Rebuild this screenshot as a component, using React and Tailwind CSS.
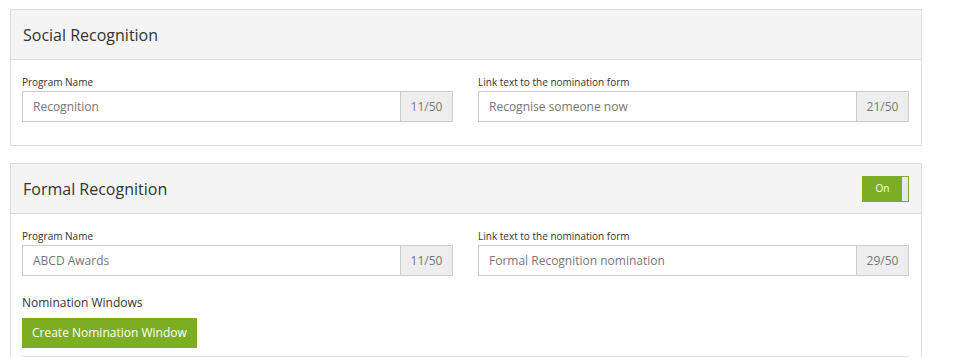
import React from 'react';

const font = { fontFamily: '"Open Sans", "Liberation Sans", sans-serif' };

const CountedInput = ({ label, value, max = 50 }) => (
  <div className="flex flex-col">
    <label className="text-[10px] leading-[15px] text-[#333] mb-[1px]">{label}</label>
    <div className="flex h-[31px]">
      <div className="flex-1 border border-[#ccc] flex items-center pl-[10px] text-[12px] text-[#777]">
        {value}
      </div>
      <div className="w-[52px] border border-l-0 border-[#ccc] bg-[#eeeeee] flex items-center justify-center text-[12px] text-[#777]">
        {value.length}/{max}
      </div>
    </div>
  </div>
);

const Panel = ({ title, toggle, children }) => (
  <div className="w-[912px] border border-[#ddd] bg-white">
    <div className="h-[50px] bg-[#f4f4f4] border-b border-[#ddd] pl-[12px] pr-[12px] flex items-center justify-between">
      <h2 className="text-[16px] text-[#333]">{title}</h2>
      {toggle && (
        <div className="w-[47px] h-[26px] bg-[#7cad23] border border-[#7cad23] flex items-stretch">
          <span className="flex-1 flex items-center justify-center text-white text-[10px]">On</span>
          <span className="w-[6px] bg-[#e8e8e8]" />
        </div>
      )}
    </div>
    <div className="pl-[11px] pr-[12px] pt-[15px]">{children}</div>
  </div>
);

export default function App() {
  return (
    <div className="pt-[9px] pl-[10px] bg-white min-h-screen" style={font}>
      <Panel title="Social Recognition">
        <div className="grid grid-cols-2 gap-x-[25px] pb-[23px]">
          <CountedInput label="Program Name" value="Recognition" />
          <CountedInput label="Link text to the nomination form" value="Recognise someone now" />
        </div>
      </Panel>

      <div className="h-[17px]" />

      <Panel title="Formal Recognition" toggle>
        <div className="grid grid-cols-2 gap-x-[25px]">
          <CountedInput label="Program Name" value="ABCD Awards" />
          <CountedInput label="Link text to the nomination form" value="Formal Recognition nomination" />
        </div>
        <p className="mt-[18px] text-[12px] leading-[18px] text-[#333]">Nomination Windows</p>
        <button className="mt-[6px] h-[30px] px-[10px] bg-[#7cad23] text-white text-[12px]">
          Create Nomination Window
        </button>
        <div className="mt-[8px] border-t border-[#ddd] h-[40px]" />
      </Panel>
    </div>
  );
}
